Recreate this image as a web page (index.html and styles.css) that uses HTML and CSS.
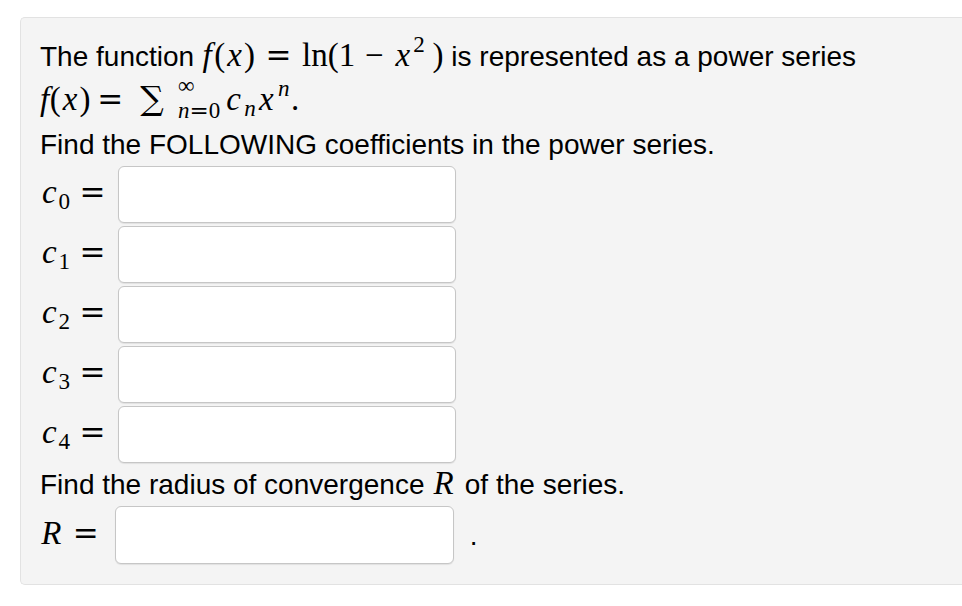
FILE: index.html
```html
<!DOCTYPE html>
<html>
<head>
<meta charset="utf-8">
<link rel="stylesheet" href="styles.css">
</head>
<body>
<div class="panel">
  <p class="q">The function <span class="m"><i class="f">f</i>(<i>x</i>)<span class="eq">=</span>ln(1<span class="bin">−</span><i>x</i><sup>2</sup><span class="rp">)</span></span> is represented as a power series<br><span class="m tight"><i class="f">f</i>(<i>x</i>)<span class="eq">=</span><span class="sum">∑</span><span class="lim"><span>∞</span><span><i>n</i><span class="eqs">=</span>0</span></span><i>c</i><sub><i>n</i></sub><i>x</i><sup><i>n</i></sup>.</span></p>
  <p class="q2">Find the FOLLOWING coefficients in the power series.</p>
  <div class="rows">
    <div class="row"><span class="m lbl"><i>c</i><sub>0</sub><span class="eq">=</span></span><input class="box" type="text"></div>
    <div class="row"><span class="m lbl"><i>c</i><sub>1</sub><span class="eq">=</span></span><input class="box" type="text"></div>
    <div class="row"><span class="m lbl"><i>c</i><sub>2</sub><span class="eq">=</span></span><input class="box" type="text"></div>
    <div class="row"><span class="m lbl"><i>c</i><sub>3</sub><span class="eq">=</span></span><input class="box" type="text"></div>
    <div class="row"><span class="m lbl"><i>c</i><sub>4</sub><span class="eq">=</span></span><input class="box" type="text"></div>
  </div>
  <p class="q3">Find the radius of convergence <span class="m"><i class="r">R</i></span> of the series.</p>
  <div class="row rrow"><span class="m lbl"><i class="r rl">R</i><span class="eq">=</span></span><input class="box rbox" type="text"><span class="dot">.</span></div>
</div>
</body>
</html>
```
FILE: styles.css
```css
html, body {
  margin: 0;
  padding: 0;
  background: #ffffff;
  overflow: hidden;
}
body {
  font-family: "Liberation Sans", Arial, sans-serif;
  font-size: 28px;
  color: #000000;
}
.panel {
  margin: 17px 0 0 20px;
  background: #f4f4f4;
  border: 1px solid #e2e2e2;
  border-right: none;
  border-radius: 5px 0 0 5px;
  padding: 17px 0 20px 19px;
}
.q {
  margin: 0;
  line-height: 44px;
}
.q2 {
  margin: 0;
  line-height: 44px;
}
.rows {
  margin-top: -1px;
  display: flex;
  flex-direction: column;
  gap: 3px;
}
.q3 {
  margin: 2px 0 0 0;
  line-height: 40px;
}
.row {
  display: flex;
  align-items: center;
}
.rrow {
  margin-top: 1px;
}
.m {
  font-family: "Liberation Serif", "Times New Roman", serif;
  font-size: 33px;
  line-height: 1;
  white-space: nowrap;
}
.m i {
  font-style: italic;
  padding: 0 0.06em;
}
.m i.f {
  padding: 0 0.08em 0 0.02em;
}
.tight i.f {
  padding: 0 0.02em 0 0;
}
.tight .eq {
  margin-left: 0.22em;
}
.m i.r {
  padding: 0 0.1em 0 0.04em;
}
.m i.rl {
  padding: 0 0.06em 0 0.04em;
}
.m sup, .m sub {
  font-size: 70%;
  line-height: 0;
}
.m sup {
  vertical-align: 0.6em;
  margin-left: 1px;
}
.m sub {
  vertical-align: -0.25em;
}
.rp {
  margin-left: 0.24em;
}
.eq {
  font-family: "DejaVu Serif", serif;
  font-size: 31px;
  line-height: 0;
  margin: 0 0.34em;
}
.bin {
  margin: 0 0.3em;
}
.sum {
  font-family: "DejaVu Serif", serif;
  font-size: 33px;
  line-height: 0;
  margin-left: 0.2em;
}
.lim {
  display: inline-flex;
  flex-direction: column;
  font-size: 23px;
  line-height: 25px;
  vertical-align: 17px;
  margin: -22px 4px -22px 14px;
}
.lim i {
  padding: 0;
}
.eqs {
  font-family: "DejaVu Serif", serif;
}
.lbl {
  line-height: 1;
  padding-bottom: 4px;
}
.lbl .eq {
  margin: 0 0.4em 0 0.3em;
}
.rrow .lbl .eq {
  margin: 0 0.52em 0 0.3em;
}
.box {
  box-sizing: border-box;
  width: 338px;
  height: 57px;
  background: #ffffff;
  border: 1px solid #c6c6c6;
  border-radius: 6px;
  box-shadow: 0 1px 1px rgba(0, 0, 0, 0.08);
  margin: 0;
  padding: 0 8px;
  font-size: 20px;
  outline: none;
}
.rbox {
  width: 339px;
  height: 58px;
}
.dot {
  margin-left: 16px;
  line-height: 1;
  padding-top: 2px;
}
```
